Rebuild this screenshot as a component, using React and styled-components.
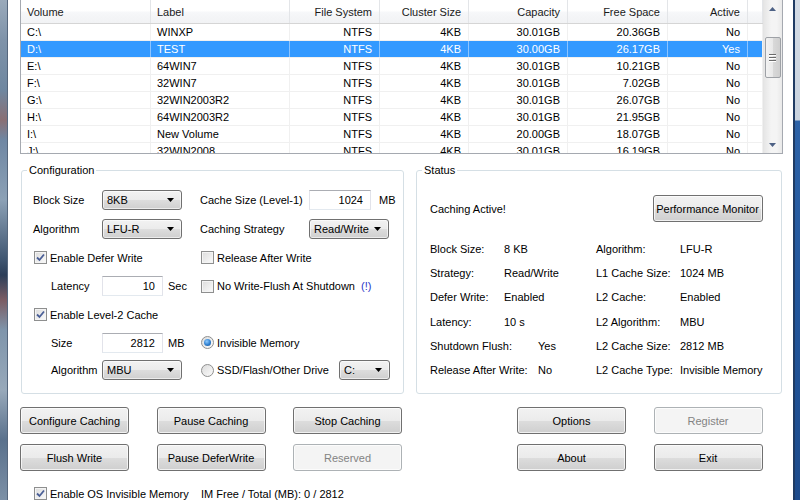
import React from 'react'
import styled, { createGlobalStyle } from 'styled-components'

const GlobalStyle = createGlobalStyle`
  html, body {
    margin: 0;
    padding: 0;
    width: 800px;
    height: 500px;
    overflow: hidden;
  }
  body {
    font-family: "Liberation Sans", Arial, sans-serif;
    font-size: 11px;
    color: #000;
    background: #fff;
  }
`;

const drives = [
  ['C:\\', 'WINXP', 'NTFS', '4KB', '30.01GB', '20.36GB', 'No'],
  ['D:\\', 'TEST', 'NTFS', '4KB', '30.00GB', '26.17GB', 'Yes'],
  ['E:\\', '64WIN7', 'NTFS', '4KB', '30.01GB', '10.21GB', 'No'],
  ['F:\\', '32WIN7', 'NTFS', '4KB', '30.01GB', '7.02GB', 'No'],
  ['G:\\', '32WIN2003R2', 'NTFS', '4KB', '30.01GB', '26.07GB', 'No'],
  ['H:\\', '64WIN2003R2', 'NTFS', '4KB', '30.01GB', '21.95GB', 'No'],
  ['I:\\', 'New Volume', 'NTFS', '4KB', '20.00GB', '18.07GB', 'No'],
  ['J:\\', '32WIN2008', 'NTFS', '4KB', '30.01GB', '16.19GB', 'No'],
]

const headers = ['Volume', 'Label', 'File System', 'Cluster Size', 'Capacity', 'Free Space', 'Active']

const status = [
  ['Block Size:', '8 KB', false, 'Algorithm:', 'LFU-R'],
  ['Strategy:', 'Read/Write', false, 'L1 Cache Size:', '1024 MB'],
  ['Defer Write:', 'Enabled', false, 'L2 Cache:', 'Enabled'],
  ['Latency:', '10 s', false, 'L2 Algorithm:', 'MBU'],
  ['Shutdown Flush:', 'Yes', true, 'L2 Cache Size:', '2812 MB'],
  ['Release After Write:', 'No', true, 'L2 Cache Type:', 'Invisible Memory'],
]

const CheckBox = ({ checked, children }) => (
  <CheckLabel>
    <Box>
      {checked && (
        <svg width="9" height="9" viewBox="0 0 9 9">
          <path d="M1 4.5 L3.5 7 L8 1.5" fill="none" stroke="#4a5f97" strokeWidth="1.8" />
        </svg>
      )}
    </Box>
    {children}
  </CheckLabel>
)

const Radio = ({ checked, children }) => (
  <CheckLabel>
    <Round>{checked && <Dot />}</Round>
    {children}
  </CheckLabel>
)

const Select = ({ value, width }) => (
  <SelectBox $width={width}>
    <span>{value}</span>
    <svg width="7" height="4" viewBox="0 0 7 4">
      <path d="M0 0 H7 L3.5 4 Z" fill="#000" />
    </svg>
  </SelectBox>
)

const App = () => {
  return (
    <Window>
      <GlobalStyle />
      <LeftFrame />
      <Content>
        <ListView>
          <List>
            <Row $header>
              {headers.map((h, i) => (
                <HeadCell key={h} $right={i > 1}>{h}</HeadCell>
              ))}
              <HeadCell />
            </Row>
            {drives.map((d, r) => (
              <Row key={d[0]} $selected={r === 1}>
                {d.map((c, i) => (
                  <Cell key={i} $right={i > 1} $selected={r === 1}>{c}</Cell>
                ))}
                <Cell $selected={false} />
              </Row>
            ))}
          </List>
          <ScrollBar>
            <Arrow>
              <svg width="7" height="4" viewBox="0 0 7 4"><path d="M0 4 H7 L3.5 0 Z" fill="#4d6185" /></svg>
            </Arrow>
            <Track>
              <Thumb>
                <Grip /><Grip /><Grip />
              </Thumb>
            </Track>
            <Arrow>
              <svg width="7" height="4" viewBox="0 0 7 4"><path d="M0 0 H7 L3.5 4 Z" fill="#4d6185" /></svg>
            </Arrow>
          </ScrollBar>
        </ListView>

        <Groups>
          <Group $width={383}>
            <Legend>Configuration</Legend>
            <ConfigGrid>
              <Text>Block Size</Text>
              <Select value="8KB" width={80} />
              <Text>Cache Size (Level-1)</Text>
              <Field $width={62}>1024</Field>
              <Text>MB</Text>

              <Text>Algorithm</Text>
              <Select value="LFU-R" width={80} />
              <Text>Caching Strategy</Text>
              <Span $from={4} $to={6}><Select value="Read/Write" width={80} /></Span>

              <Span $from={1} $to={3}><CheckBox checked>Enable Defer Write</CheckBox></Span>
              <Span $from={3} $to={6}><CheckBox>Release After Write</CheckBox></Span>

              <Text $indent>Latency</Text>
              <Inline><Field $width={61}>10</Field><Unit>Sec</Unit></Inline>
              <Span $from={3} $to={6}>
                <Inline><CheckBox>No Write-Flush At Shutdown</CheckBox><Warn>(!)</Warn></Inline>
              </Span>

              <Span $from={1} $to={6}><CheckBox checked>Enable Level-2 Cache</CheckBox></Span>

              <Text $indent>Size</Text>
              <Inline><Field $width={61}>2812</Field><Unit>MB</Unit></Inline>
              <Span $from={3} $to={6}><Radio checked>Invisible Memory</Radio></Span>

              <Text $indent>Algorithm</Text>
              <Select value="MBU" width={80} />
              <Span $from={3} $to={6}>
                <Spread><Radio>SSD/Flash/Other Drive</Radio><Select value="C:" width={51} /></Spread>
              </Span>
            </ConfigGrid>
          </Group>

          <Group>
            <Legend>Status</Legend>
            <StatusBody>
              <StatusTop>
                <span>Caching Active!</span>
                <Button $width={110}>Performance Monitor</Button>
              </StatusTop>
              <InfoGrid>
                {status.map(s => (
                  <React.Fragment key={s[0]}>
                    <span>{s[0]}</span>
                    <Value $indent={s[2]}>{s[1]}</Value>
                    <span>{s[3]}</span>
                    <Value>{s[4]}</Value>
                  </React.Fragment>
                ))}
              </InfoGrid>
            </StatusBody>
          </Group>
        </Groups>

        <Buttons>
          <Button>Configure Caching</Button>
          <Button>Pause Caching</Button>
          <Button>Stop Caching</Button>
          <span />
          <Button>Options</Button>
          <Button disabled>Register</Button>

          <Button>Flush Write</Button>
          <Button>Pause DeferWrite</Button>
          <Button disabled>Reserved</Button>
          <span />
          <Button>About</Button>
          <Button>Exit</Button>
        </Buttons>

        <Footer>
          <CheckBox checked>Enable OS Invisible Memory</CheckBox>
          <span>IM Free / Total (MB): 0 / 2812</span>
        </Footer>
      </Content>
      <RightFrame />
    </Window>
  )
}

export default App

const Window = styled.div`
  display: flex;
  width: 800px;
  height: 500px;
  overflow: hidden;
`;

const LeftFrame = styled.div`
  width: 7px;
  flex: none;
  border-right: 1px solid #56677d;
  background: linear-gradient(180deg, #9aaabb 0%, #7f93a9 8%, #6f87a0 18%, #8a6f74 24%, #6f87a3 28%,
    #8ca1b6 40%, #3f5570 52%, #2c3e58 55%, #7b5c63 60%, #7f95ab 66%, #98a9ba 78%, #5a718c 88%, #7c90a6 100%);
`;

const RightFrame = styled.div`
  width: 6px;
  flex: none;
  border-left: 2px solid #1f3b63;
  border-right: 1px solid #173f78;
  background: linear-gradient(180deg, #d3dbe5 0, #c9d3df 120px, #2d63a8 121px, #22569c 60%, #1d4b8c 100%);
`;

const Content = styled.div`
  flex: 1;
  background: #fff;
  padding: 0 10px 0 12px;
  display: flex;
  flex-direction: column;
`;

const ListView = styled.div`
  height: 153px;
  flex: none;
  display: flex;
  border: 1px solid #a5a9b0;
  border-top: 0;
  overflow: hidden;
`;

const List = styled.div`
  flex: 1;
  overflow: hidden;
`;

const Row = styled.div`
  display: grid;
  grid-template-columns: 130px 139px 90px 89px 99px 100px 80px 1fr;
  height: ${p => p.$header ? '24px' : '17px'};
  background: ${p => p.$header
    ? 'linear-gradient(180deg, #ffffff 0%, #ffffff 45%, #f6f7f9 55%, #f1f2f4 100%)'
    : p.$selected ? '#3399ff' : '#fff'};
  border-bottom: 1px solid ${p => p.$header ? '#d5d5d5' : '#f0f0f0'};
  box-sizing: border-box;
`;

const HeadCell = styled.div`
  display: flex;
  align-items: center;
  justify-content: ${p => p.$right ? 'flex-end' : 'flex-start'};
  padding: 0 7px 0 6px;
  border-right: 1px solid #e3e5e8;
  white-space: nowrap;
  overflow: hidden;
  color: #1a1a1a;
`;

const Cell = styled.div`
  display: flex;
  align-items: center;
  justify-content: ${p => p.$right ? 'flex-end' : 'flex-start'};
  padding: 0 7px 0 6px;
  border-right: 1px solid ${p => p.$selected ? '#8cc4ff' : '#f0f0f0'};
  color: ${p => p.$selected ? '#fff' : '#000'};
  white-space: nowrap;
  overflow: hidden;
`;

const ScrollBar = styled.div`
  width: 18px;
  flex: none;
  display: flex;
  flex-direction: column;
  background: linear-gradient(90deg, #e6e6e6, #f4f4f4 40%, #f4f4f4 70%, #e9e9e9);
  border-left: 1px solid #e4e4e4;
`;

const Arrow = styled.div`
  height: 17px;
  display: flex;
  align-items: center;
  justify-content: center;
`;

const Track = styled.div`
  flex: 1;
  padding: 20px 1px 0 1px;
`;

const Thumb = styled.div`
  height: 39px;
  border: 1px solid #9ea1a6;
  border-radius: 2px;
  background: linear-gradient(90deg, #f3f3f3, #e8e8e8 50%, #d9d9d9 51%, #cfcfcf);
  display: flex;
  flex-direction: column;
  align-items: center;
  justify-content: center;
  gap: 2px;
`;

const Grip = styled.div`
  width: 7px;
  height: 1px;
  background: #6b6b6b;
  box-shadow: 0 1px 0 #fff;
`;

const Groups = styled.div`
  display: flex;
  gap: 12px;
  margin: 10px 1px 0 1px;
`;

const Group = styled.fieldset`
  margin: 0;
  padding: 0;
  border: 1px solid #d5dfe5;
  border-radius: 3px;
  box-sizing: border-box;
  height: 230px;
  min-width: 0;
  flex: ${p => p.$width ? 'none' : '1'};
  width: ${p => p.$width ? p.$width + 'px' : 'auto'};
`;

const Legend = styled.legend`
  margin-left: 5px;
  padding: 0 2px;
  line-height: 12px;
  font-size: 11px;
`;

const ConfigGrid = styled.div`
  display: grid;
  grid-template-columns: 69px 98px 109px 70px 11px;
  grid-template-rows: 28px 29px 29px 28.5px 28.5px 27.5px 27.5px;
  align-items: center;
  padding: 10px 0 0 11px;
`;

const Text = styled.span`
  padding-left: ${p => p.$indent ? '18px' : '0'};
  white-space: nowrap;
`;

const Span = styled.div`
  grid-column: ${p => p.$from} / ${p => p.$to};
`;

const Inline = styled.div`
  display: flex;
  align-items: center;
`;

const Spread = styled.div`
  display: flex;
  align-items: center;
  justify-content: space-between;
`;

const Unit = styled.span`
  margin-left: 5px;
`;

const Warn = styled.span`
  margin-left: 6px;
  color: #2b35c8;
`;

const CheckLabel = styled.div`
  display: flex;
  align-items: center;
  gap: 3px;
  padding-left: 1px;
  white-space: nowrap;
`;

const Box = styled.span`
  width: 11px;
  height: 11px;
  border: 1px solid #8e8f8f;
  background: linear-gradient(135deg, #dcdcdc, #fbfbfb);
  box-shadow: inset 0 0 0 1px #f4f4f4;
  display: flex;
  align-items: center;
  justify-content: center;
`;

const Round = styled.span`
  width: 11px;
  height: 11px;
  border: 1px solid #8e8f8f;
  border-radius: 50%;
  background: linear-gradient(135deg, #dcdcdc, #fbfbfb);
  display: flex;
  align-items: center;
  justify-content: center;
`;

const Dot = styled.span`
  width: 7px;
  height: 7px;
  border-radius: 50%;
  background: radial-gradient(circle at 40% 35%, #8ecbff 0%, #2e7fd0 55%, #1a4f8c 100%);
`;

const SelectBox = styled.div`
  width: ${p => p.$width}px;
  height: 20px;
  box-sizing: border-box;
  border: 1px solid #707070;
  border-radius: 3px;
  background: linear-gradient(180deg, #f2f2f2 0%, #ebebeb 50%, #dddddd 51%, #cfcfcf 100%);
  box-shadow: inset 0 0 0 1px rgba(255, 255, 255, 0.6);
  display: flex;
  align-items: center;
  justify-content: space-between;
  padding: 0 7px 0 4px;
`;

const Field = styled.div`
  width: ${p => p.$width}px;
  height: 20px;
  box-sizing: border-box;
  border: 1px solid #e2e3ea;
  border-top-color: #abadb3;
  border-bottom-color: #e3e9ef;
  background: #fff;
  display: flex;
  align-items: center;
  justify-content: flex-end;
  padding-right: 7px;
`;

const StatusBody = styled.div`
  padding: 19px 18px 0 13px;
`;

const StatusTop = styled.div`
  display: flex;
  align-items: center;
  justify-content: space-between;
`;

const InfoGrid = styled.div`
  display: grid;
  grid-template-columns: 74px 92px 84px auto;
  grid-auto-rows: 16px;
  row-gap: 8.2px;
  align-items: center;
  margin-top: 19px;
  white-space: nowrap;
`;

const Value = styled.span`
  padding-left: ${p => p.$indent ? '34px' : '0'};
`;

const Button = styled.button`
  height: 27px;
  width: ${p => p.$width ? p.$width + 'px' : 'auto'};
  box-sizing: border-box;
  border: 1px solid ${p => p.disabled ? '#adb2b5' : '#707070'};
  border-radius: 3px;
  background: ${p => p.disabled
    ? '#f4f4f4'
    : 'linear-gradient(180deg, #f2f2f2 0%, #ebebeb 50%, #dddddd 51%, #cfcfcf 100%)'};
  box-shadow: inset 0 0 0 1px rgba(255, 255, 255, 0.7);
  font-family: inherit;
  font-size: 11px;
  color: ${p => p.disabled ? '#838383' : '#000'};
  padding: 0;
  white-space: nowrap;
`;

const Buttons = styled.div`
  display: grid;
  grid-template-columns: 109px 109px 109px 1fr 109px 109px;
  column-gap: 27.5px;
  row-gap: 10px;
  margin: 13px 20px 0 0;
`;

const Footer = styled.div`
  display: grid;
  grid-template-columns: 168px auto;
  align-items: center;
  padding-left: 13px;
  margin-top: 16px;
`;
